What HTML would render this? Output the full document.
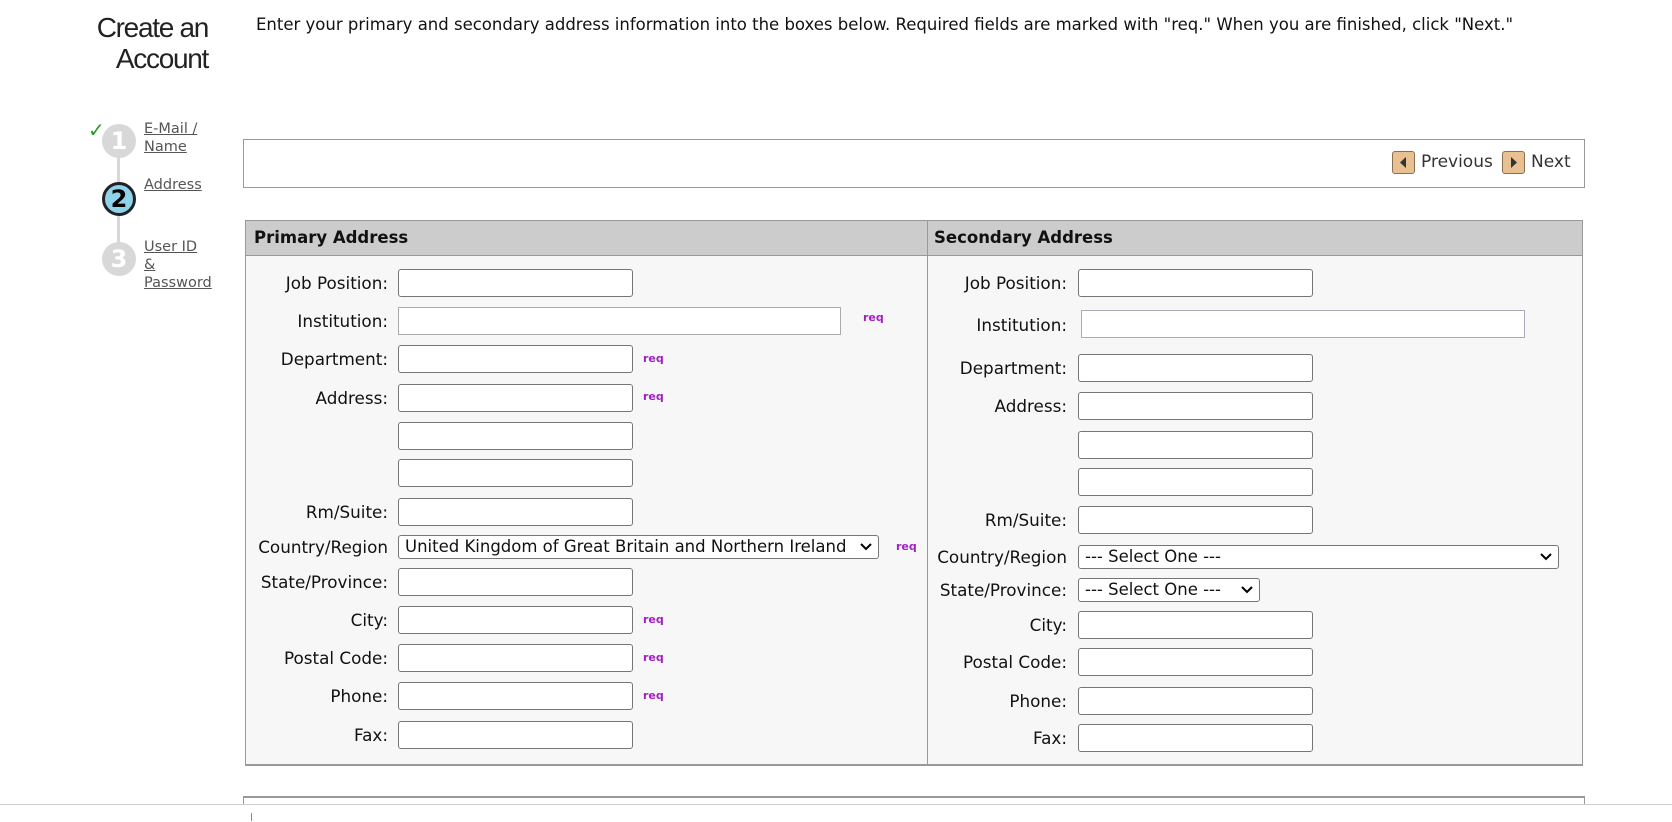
<!DOCTYPE html>
<html><head><style>
*{margin:0;padding:0;box-sizing:border-box}
body{width:1672px;height:822px;background:#fff;font-family:"DejaVu Sans","Liberation Sans",sans-serif;font-size:14px;color:#111;position:relative;overflow:hidden}
.a{position:absolute}
.lbl{position:absolute;text-align:right;white-space:nowrap;font-size:16.8px;line-height:18px}
.in{position:absolute;height:28px;background:#fff;border:1px solid #767676;border-radius:3px}
.req{position:absolute;color:#a020c0;font-size:11px;font-weight:bold}
.sel{position:absolute;height:24px;background:#fff;border:1px solid #767676;border-radius:3px;font-size:16.5px;line-height:22px;padding-left:6px;white-space:nowrap;overflow:hidden}
.sel svg{position:absolute;right:6px;top:7px}
.lnk{position:absolute;color:#555;text-decoration:underline;font-size:14.5px;line-height:18px}
.circ{position:absolute;width:34px;height:34px;border-radius:50%;background:#d8d8d8;color:#fff;font-size:24px;font-weight:bold;text-align:center;line-height:34px}
</style></head><body>
<div class="a" style="right:1464px;top:12px;font-size:28px;line-height:31px;text-align:right;color:#222;font-family:'Liberation Sans',sans-serif;white-space:nowrap;letter-spacing:-1.3px">Create an<br>Account</div>
<div class="a" style="left:256px;top:15px;font-size:16.5px;white-space:nowrap">Enter your primary and secondary address information into the boxes below. Required fields are marked with "req." When you are finished, click "Next."</div>

<div class="a" style="left:117px;top:150px;width:3px;height:110px;background:#d8d8d8"></div>
<div class="circ" style="left:102px;top:124px">1</div>
<div class="circ" style="left:102px;top:182px;background:#8fd3ea;border:3px solid #222;color:#000;line-height:28px">2</div>
<div class="circ" style="left:102px;top:242px">3</div>
<div class="a" style="left:88px;top:118px;color:#2a9a2a;font-size:20px;font-weight:bold">✓</div>
<div class="lnk" style="left:144px;top:120px">E-Mail /<br>Name</div>
<div class="lnk" style="left:144px;top:176px">Address</div>
<div class="lnk" style="left:144px;top:238px">User ID<br>&amp;<br>Password</div>

<div class="a" style="left:243px;top:139px;width:1342px;height:49px;border:1px solid #999"></div>
<div class="a" style="left:1392px;top:151px;width:23px;height:23px;background:#e8c092;border:1px solid #8a7050;border-radius:3px"><svg width="21" height="21" style="position:absolute;left:0;top:0"><polygon points="13,5 13,16 7,10.5" fill="#333"/></svg></div>
<div class="a" style="left:1421px;top:152px;font-size:17px;color:#333">Previous</div>
<div class="a" style="left:1502px;top:151px;width:23px;height:23px;background:#e8c092;border:1px solid #8a7050;border-radius:3px"><svg width="21" height="21" style="position:absolute;left:0;top:0"><polygon points="8,5 8,16 14,10.5" fill="#333"/></svg></div>
<div class="a" style="left:1531px;top:152px;font-size:17px;color:#333">Next</div>

<div class="a" style="left:245px;top:220px;width:1338px;height:546px;border:1px solid #999;border-bottom:2px solid #999;background:#f7f7f7"></div>
<div class="a" style="left:246px;top:221px;width:1336px;height:35px;background:#ccc;border-bottom:1px solid #999"></div>
<div class="a" style="left:927px;top:221px;width:1px;height:544px;background:#999"></div>
<div class="a" style="left:254px;top:228px;font-weight:bold;font-size:16.5px">Primary Address</div>
<div class="a" style="left:934px;top:228px;font-weight:bold;font-size:16.5px">Secondary Address</div>

<!-- primary -->
<div class="lbl" style="right:1284px;top:274px">Job Position:</div><div class="in" style="left:398px;top:269px;width:235px"></div>
<div class="lbl" style="right:1284px;top:312px">Institution:</div><div class="in" style="left:398px;top:307px;width:443px;border-radius:0;border-color:#aaa"></div><div class="req" style="left:863px;top:311px">req</div>
<div class="lbl" style="right:1284px;top:350px">Department:</div><div class="in" style="left:398px;top:345px;width:235px"></div><div class="req" style="left:643px;top:352px">req</div>
<div class="lbl" style="right:1284px;top:389px">Address:</div><div class="in" style="left:398px;top:384px;width:235px"></div><div class="req" style="left:643px;top:390px">req</div>
<div class="in" style="left:398px;top:422px;width:235px"></div>
<div class="in" style="left:398px;top:459px;width:235px"></div>
<div class="lbl" style="right:1284px;top:503px">Rm/Suite:</div><div class="in" style="left:398px;top:498px;width:235px"></div>
<div class="lbl" style="right:1284px;top:538px">Country/Region</div><div class="sel" style="left:398px;top:535px;width:481px">United Kingdom of Great Britain and Northern Ireland<svg width="12" height="8"><path d="M1 1 L6 6 L11 1" stroke="#000" stroke-width="2" fill="none"/></svg></div><div class="req" style="left:896px;top:540px">req</div>
<div class="lbl" style="right:1284px;top:573px">State/Province:</div><div class="in" style="left:398px;top:568px;width:235px"></div>
<div class="lbl" style="right:1284px;top:611px">City:</div><div class="in" style="left:398px;top:606px;width:235px"></div><div class="req" style="left:643px;top:613px">req</div>
<div class="lbl" style="right:1284px;top:649px">Postal Code:</div><div class="in" style="left:398px;top:644px;width:235px"></div><div class="req" style="left:643px;top:651px">req</div>
<div class="lbl" style="right:1284px;top:687px">Phone:</div><div class="in" style="left:398px;top:682px;width:235px"></div><div class="req" style="left:643px;top:689px">req</div>
<div class="lbl" style="right:1284px;top:726px">Fax:</div><div class="in" style="left:398px;top:721px;width:235px"></div>

<!-- secondary -->
<div class="lbl" style="right:605px;top:274px">Job Position:</div><div class="in" style="left:1078px;top:269px;width:235px"></div>
<div class="lbl" style="right:605px;top:316px">Institution:</div><div class="in" style="left:1081px;top:310px;width:444px;border-radius:0;border-color:#aab"></div>
<div class="lbl" style="right:605px;top:359px">Department:</div><div class="in" style="left:1078px;top:354px;width:235px"></div>
<div class="lbl" style="right:605px;top:397px">Address:</div><div class="in" style="left:1078px;top:392px;width:235px"></div>
<div class="in" style="left:1078px;top:431px;width:235px"></div>
<div class="in" style="left:1078px;top:468px;width:235px"></div>
<div class="lbl" style="right:605px;top:511px">Rm/Suite:</div><div class="in" style="left:1078px;top:506px;width:235px"></div>
<div class="lbl" style="right:605px;top:548px">Country/Region</div><div class="sel" style="left:1078px;top:545px;width:481px">--- Select One ---<svg width="12" height="8"><path d="M1 1 L6 6 L11 1" stroke="#000" stroke-width="2" fill="none"/></svg></div>
<div class="lbl" style="right:605px;top:581px">State/Province:</div><div class="sel" style="left:1078px;top:578px;width:182px">--- Select One ---<svg width="12" height="8"><path d="M1 1 L6 6 L11 1" stroke="#000" stroke-width="2" fill="none"/></svg></div>
<div class="lbl" style="right:605px;top:616px">City:</div><div class="in" style="left:1078px;top:611px;width:235px"></div>
<div class="lbl" style="right:605px;top:653px">Postal Code:</div><div class="in" style="left:1078px;top:648px;width:235px"></div>
<div class="lbl" style="right:605px;top:692px">Phone:</div><div class="in" style="left:1078px;top:687px;width:235px"></div>
<div class="lbl" style="right:605px;top:729px">Fax:</div><div class="in" style="left:1078px;top:724px;width:235px"></div>

<div class="a" style="left:243px;top:796px;width:1342px;height:20px;border:1px solid #999;border-top:2px solid #999;border-bottom:none"></div>
<div class="a" style="left:0;top:804px;width:1672px;height:18px;background:#fff;border-top:1px solid #ccc"></div>
<div class="a" style="left:251px;top:813px;width:1px;height:8px;background:#888"></div>
</body></html>
